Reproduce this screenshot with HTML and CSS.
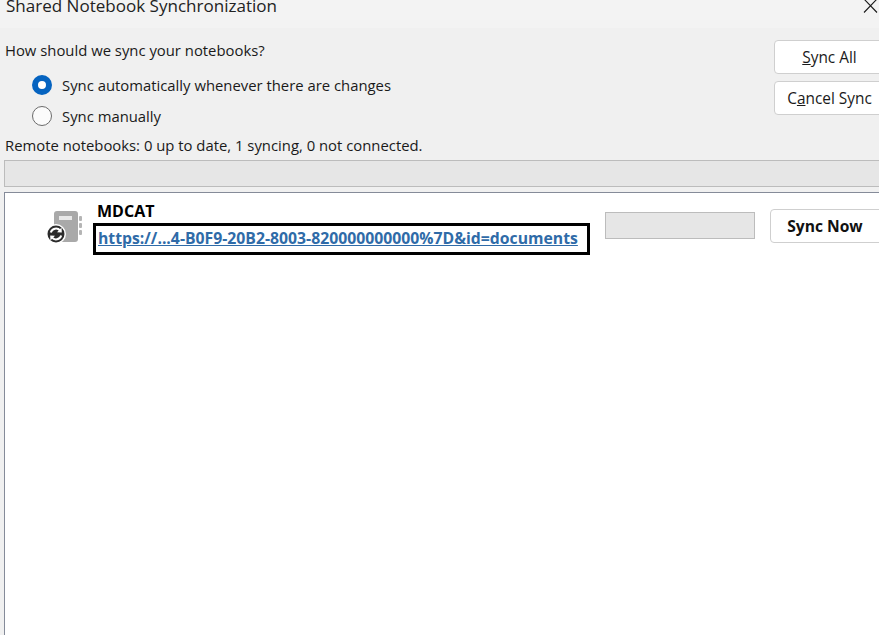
FILE: index.html
```html
<!DOCTYPE html>
<html lang="en">
<head>
<meta charset="utf-8">
<title>Shared Notebook Synchronization</title>
<link rel="stylesheet" href="styles.css">
</head>
<body>
<div class="dialog">
  <header class="titlebar">
    <h1 class="title">Shared Notebook Synchronization</h1>
    <svg class="close" width="16" height="14" viewBox="0 0 16 14" aria-label="Close"><path d="M1 -1 L14 12.5 M14 -1 L1 12.5" fill="none" stroke="#1a1a1a" stroke-width="1.1"/></svg>
  </header>
  <section class="options">
    <div class="choices">
      <p class="question">How should we sync your notebooks?</p>
      <label class="radio-row first"><span class="radio checked"></span><span>Sync automatically whenever there are changes</span></label>
      <label class="radio-row"><span class="radio"></span><span>Sync manually</span></label>
      <p class="status">Remote notebooks: 0 up to date, 1 syncing, 0 not connected.</p>
    </div>
    <div class="actions">
      <button class="btn"><span class="u">S</span>ync All</button>
      <button class="btn">C<span class="u">a</span>ncel Sync</button>
    </div>
  </section>
  <div class="overall-bar"></div>
  <main class="list">
    <div class="row">
      <svg class="nb-icon" width="36" height="36" viewBox="0 0 36 36">
        <rect x="8" y="1" width="24" height="31" rx="3" fill="#a9a9a9"/>
        <rect x="13" y="6" width="13" height="4" fill="#e8e8e8"/>
        <rect x="33" y="6" width="3" height="5" rx="1" fill="#b5b5b5"/>
        <rect x="33" y="13" width="3" height="5" rx="1" fill="#b5b5b5"/>
        <rect x="33" y="20" width="3" height="5" rx="1" fill="#b5b5b5"/>
        <circle cx="10" cy="24" r="10" fill="#fff"/>
        <circle cx="10" cy="24" r="8.5" fill="#2b2b2b"/>
        <path d="M4.8 22.5 A5.4 5.4 0 0 1 14.2 20.6" fill="none" stroke="#fff" stroke-width="2"/>
        <path d="M15.6 17.6 L15.8 22.4 L11 22.2 Z" fill="#fff"/>
        <path d="M15.2 25.5 A5.4 5.4 0 0 1 5.8 27.4" fill="none" stroke="#fff" stroke-width="2"/>
        <path d="M4.4 30.4 L4.2 25.6 L9 25.8 Z" fill="#fff"/>
      </svg>
      <div class="info">
        <div class="name">MDCAT</div>
        <a class="link" href="#">https://...4-B0F9-20B2-8003-820000000000%7D&amp;id=documents</a>
      </div>
      <div class="row-bar"></div>
      <button class="btn now">Sync Now</button>
    </div>
  </main>
</div>
</body>
</html>
```
FILE: styles.css
```css
* { box-sizing: border-box; }
html, body { margin: 0; height: 100%; overflow: hidden; }
body { width: 879px; height: 635px; background: #f0f0f0; color: #1a1a1a; font-family: "Open Sans", "Noto Sans", sans-serif; font-size: 14.85px; }
.dialog { display: flex; flex-direction: column; height: 635px; overflow: hidden; }
.titlebar { display: flex; justify-content: space-between; height: 28px; flex: none; background: #f3f3f3; padding: 0 0 0 6px; }
.title { margin: -5px 0 0; font-size: 17.05px; font-weight: 400; line-height: 22px; color: #222; }
.close { flex: none; }
.options { display: flex; justify-content: space-between; height: 132px; flex: none; padding-left: 5px; background: #f0f0f0; }
.choices { display: flex; flex-direction: column; }
.question { margin: 12px 0 0; line-height: 20px; }
.radio-row { display: flex; align-items: center; gap: 10px; margin: 11px 0 0 27px; line-height: 20px; height: 20px; }
.radio-row.first { margin-top: 15px; }
.radio { width: 20px; height: 20px; border-radius: 50%; border: 1px solid #6b6b6b; background: #fbfbfb; flex: none; }
.radio.checked { border: 6px solid #0563c0; background: #fff; }
.status { margin: 9px 0 0; line-height: 20px; }
.actions { display: flex; flex-direction: column; gap: 7px; width: 105px; margin-top: 12px; flex: none; }
.btn { display: block; height: 34px; width: 120px; background: #fff; border: 1px solid #cfcfcf; border-radius: 4px; font: inherit; font-size: 15.4px; color: #1a1a1a; padding: 1px 9px 0 0; text-align: center; }
.u { text-decoration: underline; }
.overall-bar { height: 27px; margin-left: 4px; flex: none; background: #e6e6e6; border: 1px solid #bcbcbc; border-right: 0; }
.list { flex: 1; margin: 5px 0 0 4px; background: #fff; border-top: 1px solid #858b99; border-left: 1px solid #858b99; }
.row { display: flex; align-items: flex-start; padding-top: 16px; }
.nb-icon { margin: 1px 0 0 41px; flex: none; }
.info { width: 497px; margin-left: 11px; flex: none; }
.name { font-weight: 700; font-size: 16px; line-height: 20px; margin: -8px 0 0 4px; color: #000; }
.link { display: block; height: 32px; margin-top: 2px; border: 3px solid #000; padding-left: 2px; line-height: 24px; font-weight: 700; color: #2f6ba8; text-decoration: underline; white-space: nowrap; font-size: 15.77px; }
.row-bar { width: 150px; height: 27px; margin: 3px 0 0 15px; background: #e6e6e6; border: 1px solid #bcbcbc; flex: none; }
.btn.now { margin-left: 15px; flex: none; font-weight: 700; font-size: 15.6px; color: #111; padding: 0 10px 0 0; }
```
